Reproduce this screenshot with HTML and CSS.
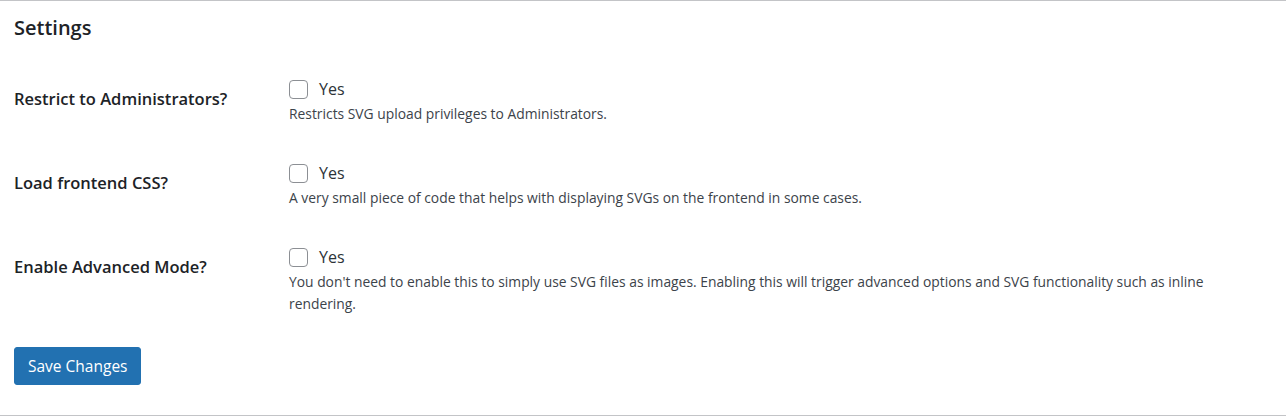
FILE: index.html
```html
<!DOCTYPE html>
<html lang="en">
<head>
<meta charset="utf-8">
<title>Settings</title>
<link rel="stylesheet" href="styles.css">
</head>
<body>
<div class="wrap">
  <h2 class="title">Settings</h2>
  <div class="form">
    <div class="row">
      <div class="th">Restrict to Administrators?</div>
      <div class="td">
        <label class="check"><input type="checkbox" class="box">Yes</label>
        <p class="desc">Restricts SVG upload privileges to Administrators.</p>
      </div>
    </div>
    <div class="row">
      <div class="th">Load frontend CSS?</div>
      <div class="td">
        <label class="check"><input type="checkbox" class="box">Yes</label>
        <p class="desc">A very small piece of code that helps with displaying SVGs on the frontend in some cases.</p>
      </div>
    </div>
    <div class="row">
      <div class="th">Enable Advanced Mode?</div>
      <div class="td">
        <label class="check"><input type="checkbox" class="box">Yes</label>
        <p class="desc">You don't need to enable this to simply use SVG files as images. Enabling this will trigger advanced options and SVG functionality such as inline rendering.</p>
      </div>
    </div>
  </div>
  <div class="actions">
    <button type="button" class="btn">Save Changes</button>
  </div>
</div>
</body>
</html>
```

FILE: styles.css
```css
html, body {
  margin: 0;
  padding: 0;
  background: #ffffff;
}
body {
  font-family: "Open Sans", "Noto Sans", "Liberation Sans", sans-serif;
  color: #3c434a;
}
.wrap {
  box-sizing: border-box;
  height: 416px;
  border-top: 1px solid #c3c4c7;
  border-bottom: 1px solid #c3c4c7;
  padding: 0 46px 0 14px;
}
.title {
  margin: 0;
  padding-top: 13px;
  font-size: 20px;
  line-height: 28px;
  font-weight: 600;
  color: #1d2327;
}
.form {
  margin-top: 23px;
}
.row {
  display: grid;
  grid-template-columns: 275px 1fr;
}
.th {
  padding-top: 24px;
  font-size: 16.5px;
  line-height: 20px;
  font-weight: 600;
  color: #1d2327;
}
.td {
  padding: 15px 0 24px;
}
.check {
  display: flex;
  align-items: center;
  gap: 11px;
  height: 19px;
  font-size: 16px;
  line-height: 19px;
  color: #2c3338;
}
.box {
  appearance: none;
  -webkit-appearance: none;
  box-sizing: border-box;
  width: 19px;
  height: 19px;
  margin: 0;
  border: 1px solid #8c8f94;
  border-radius: 4px;
  background: #fff;
}
.desc {
  margin: 4px 0 0;
  font-size: 13.85px;
  line-height: 22px;
  color: #3c434a;
}
.actions {
  padding-top: 8px;
}
.btn {
  font-family: inherit;
  font-size: 15.5px;
  line-height: 20px;
  height: 38px;
  padding: 0 13px;
  border: 1px solid #2271b1;
  border-radius: 3px;
  background: #2271b1;
  color: #ffffff;
  cursor: pointer;
}
```
